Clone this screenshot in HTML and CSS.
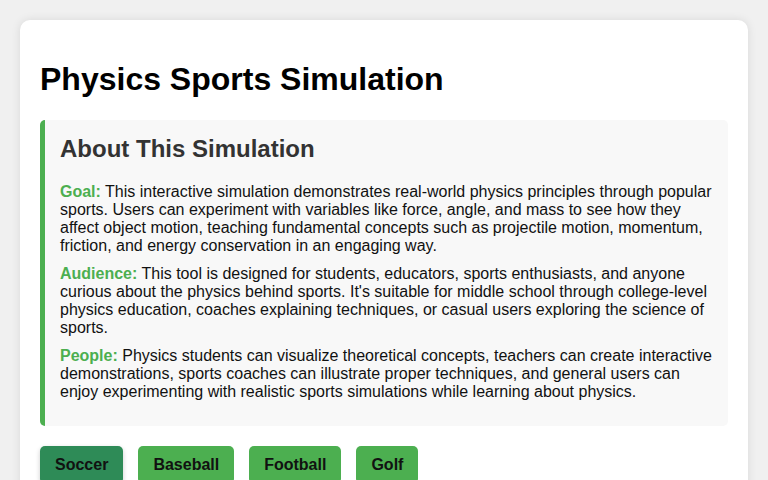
FILE: index.html
```html
<!DOCTYPE html>
<html lang="en">
<head>
<meta charset="utf-8">
<title>Physics Sports Simulation</title>
<link rel="stylesheet" href="styles.css">
</head>
<body>
<div class="container">
  <h1 class="title">Physics Sports Simulation</h1>
  <div class="info">
    <h2 class="info-title">About This Simulation</h2>
    <p class="info-text"><strong class="label">Goal:</strong> This interactive simulation demonstrates real-world physics principles through popular sports. Users can experiment with variables like force, angle, and mass to see how they affect object motion, teaching fundamental concepts such as projectile motion, momentum, friction, and energy conservation in an engaging way.</p>
    <p class="info-text"><strong class="label">Audience:</strong> This tool is designed for students, educators, sports enthusiasts, and anyone curious about the physics behind sports. It's suitable for middle school through college-level physics education, coaches explaining techniques, or casual users exploring the science of sports.</p>
    <p class="info-text"><strong class="label">People:</strong> Physics students can visualize theoretical concepts, teachers can create interactive demonstrations, sports coaches can illustrate proper techniques, and general users can enjoy experimenting with realistic sports simulations while learning about physics.</p>
  </div>
  <div class="sports">
    <button class="sport-btn active">Soccer</button>
    <button class="sport-btn">Baseball</button>
    <button class="sport-btn">Football</button>
    <button class="sport-btn">Golf</button>
  </div>
</div>
</body>
</html>
```
FILE: styles.css
```css
html, body {
  margin: 0;
  background: #f0f0f0;
}
body {
  padding: 20px;
  font-family: "Liberation Sans", Arial, sans-serif;
  color: #222;
}
.container {
  background: #fff;
  border-radius: 10px;
  box-shadow: 0 0 10px rgba(0, 0, 0, 0.1);
  padding: 20px;
}
.title {
  font-size: 32px;
  margin: 21px 0 22px;
  color: #000;
  font-weight: bold;
}
.info {
  background: #f8f8f8;
  border-left: 5px solid #4CAF50;
  border-radius: 5px;
  padding: 15px;
}
.info-title {
  margin: 0 0 20px;
  font-size: 24px;
  color: #333;
}
.info-text {
  margin: 10px 0;
  font-size: 16px;
  line-height: 18px;
  color: #111;
}
.label {
  color: #4CAF50;
}
.sports {
  display: flex;
  gap: 15px;
  margin-top: 20px;
}
.sport-btn {
  font-family: "Liberation Sans", Arial, sans-serif;
  font-size: 16px;
  font-weight: bold;
  line-height: 18px;
  padding: 10px 15px;
  border: none;
  border-radius: 5px;
  background: #4CAF50;
  color: #111;
}
.sport-btn.active {
  background: #2E8B57;
  box-shadow: 0 2px 5px rgba(0, 0, 0, 0.2);
}
```
